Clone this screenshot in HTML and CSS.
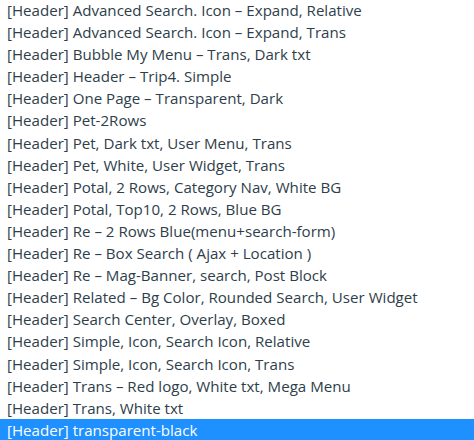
FILE: index.html
```html
<!DOCTYPE html>
<html lang="en">
<head>
<meta charset="utf-8">
<title>Header list</title>
<link rel="stylesheet" href="styles.css">
</head>
<body>
<ul class="list">
  <li class="item">[Header] Advanced Search. Icon – Expand, Relative</li>
  <li class="item">[Header] Advanced Search. Icon – Expand, Trans</li>
  <li class="item">[Header] Bubble My Menu – Trans, Dark txt</li>
  <li class="item">[Header] Header – Trip4. Simple</li>
  <li class="item">[Header] One Page – Transparent, Dark</li>
  <li class="item">[Header] Pet-2Rows</li>
  <li class="item">[Header] Pet, Dark txt, User Menu, Trans</li>
  <li class="item">[Header] Pet, White, User Widget, Trans</li>
  <li class="item">[Header] Potal, 2 Rows, Category Nav, White BG</li>
  <li class="item">[Header] Potal, Top10, 2 Rows, Blue BG</li>
  <li class="item">[Header] Re – 2 Rows Blue(menu+search-form)</li>
  <li class="item">[Header] Re – Box Search ( Ajax + Location )</li>
  <li class="item">[Header] Re – Mag-Banner, search, Post Block</li>
  <li class="item">[Header] Related – Bg Color, Rounded Search, User Widget</li>
  <li class="item">[Header] Search Center, Overlay, Boxed</li>
  <li class="item">[Header] Simple, Icon, Search Icon, Relative</li>
  <li class="item">[Header] Simple, Icon, Search Icon, Trans</li>
  <li class="item">[Header] Trans – Red logo, White txt, Mega Menu</li>
  <li class="item">[Header] Trans, White txt</li>
  <li class="item item-selected">[Header] transparent-black</li>
</ul>
</body>
</html>
```
FILE: styles.css
```css
html, body {
  margin: 0;
  padding: 0;
  background: #ffffff;
}
body {
  font-family: "Open Sans", "Noto Sans", sans-serif;
  overflow: hidden;
}
.list {
  list-style: none;
  margin: -1px 0 0 0;
  padding: 0;
}
.item {
  height: 22.1px;
  line-height: 22.1px;
  padding-left: 7px;
  font-size: 15.1px;
  color: #2e3e4a;
  white-space: nowrap;
}
.item-selected {
  background: #1e90ff;
  color: #ffffff;
}
```
